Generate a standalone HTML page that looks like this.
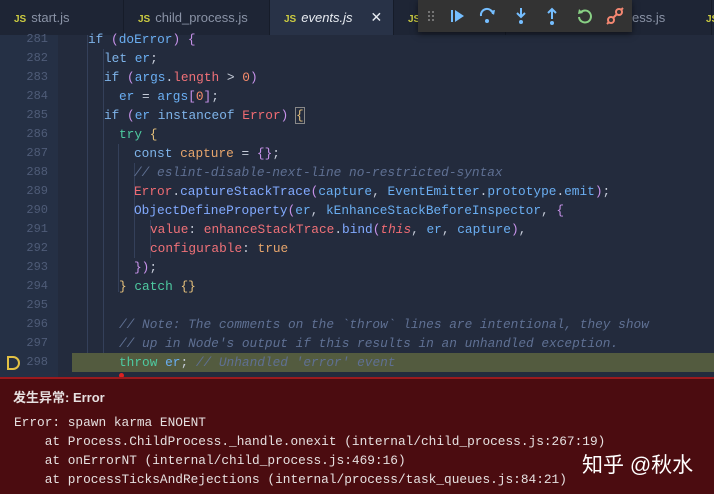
<!DOCTYPE html>
<html><head><meta charset="utf-8"><style>
*{margin:0;padding:0;box-sizing:border-box}
body{width:714px;height:494px;overflow:hidden;background:#232b3d;font-family:"Liberation Mono",monospace;position:relative}
.tabs{position:absolute;left:0;top:0;width:714px;height:35px;background:#1e2535;font-family:"Liberation Sans",sans-serif;font-size:13px;color:#8a93a6}
.tab{position:absolute;top:0;height:35px;line-height:35px;border-right:1px solid #161c29}
.js{color:#cbcb41;font-weight:bold;font-size:10px;margin-right:5px}
.tb{position:absolute;left:418px;top:0;width:214px;height:32px;background:#333;box-shadow:0 2px 6px rgba(0,0,0,.5)}
.gut{position:absolute;left:0;top:35px;width:58px;height:342px;background:#253045}
.ln{position:absolute;left:0;width:48px;text-align:right;font-size:12px;color:#4f5c78;height:19px;line-height:19px}
.code{position:absolute;left:72px;font-size:12.8px;color:#c5cbd8;white-space:pre;height:19px;line-height:19px}
.k{color:#7fb4ea}.t{color:#4ec9a0}.v{color:#6aaef2}.p{color:#f07178}.f{color:#82aaff}.r{color:#ef6b73}.o{color:#e6a56c}.c{color:#5f7093;font-style:italic}.b{color:#c792ea}.y{color:#e5c07b}.n{color:#f78c6c}
.guide{position:absolute;width:1px;background:#34405a}
.err{position:absolute;left:0;top:377px;width:714px;height:117px;background:#4b0c10;border-top:2px solid #9a1a1e;color:#e6e0e0}
</style></head><body>
<div class="tabs">
 <div class="tab" style="left:0;width:124px;padding-left:14px"><span class="js">JS</span>start.js</div>
 <div class="tab" style="left:124px;width:146px;padding-left:14px"><span class="js">JS</span>child_process.js</div>
 <div class="tab" style="left:270px;width:124px;padding-left:14px;background:#283247;color:#e8ecf2"><span class="js">JS</span><i>events.js</i><span style="margin-left:18px;font-size:14px">✕</span></div>
 <div class="tab" style="left:394px;width:112px;padding-left:14px"><span class="js">JS</span></div>
 <div class="tab" style="left:632px;width:80px;padding-left:0">ess.js</div>
 <div class="tab" style="left:706px;width:20px;padding-left:0;border:none"><span class="js">JS</span></div>
</div>
<div class="tb">
<svg width="214" height="32" viewBox="0 0 214 32">
<g fill="#8a8a8a"><circle cx="11" cy="12" r="1"/><circle cx="15" cy="12" r="1"/><circle cx="11" cy="16" r="1"/><circle cx="15" cy="16" r="1"/><circle cx="11" cy="20" r="1"/><circle cx="15" cy="20" r="1"/></g>
<rect x="33" y="10" width="2" height="12" fill="#75beff"/><path d="M37 10 L46 16 L37 22Z" fill="#75beff"/>
<path d="M63 16 A6 6 0 0 1 75 14" stroke="#75beff" stroke-width="2" fill="none"/><path d="M72 11 L76 15 L77 10Z" fill="#75beff"/><circle cx="69" cy="21" r="2" fill="#75beff"/>
<path d="M103 8 V17 M99 13 L103 17 L107 13" stroke="#75beff" stroke-width="2" fill="none"/><circle cx="103" cy="22" r="2" fill="#75beff"/>
<path d="M134 19 V9 M130 13 L134 9 L138 13" stroke="#75beff" stroke-width="2" fill="none"/><circle cx="134" cy="23" r="2" fill="#75beff"/>
<path d="M163 12 A6 6 0 1 1 161 17" stroke="#89d185" stroke-width="2" fill="none"/><path d="M161 9 L165 13 L160 14Z" fill="#89d185"/>
<g stroke="#f48771" stroke-width="2" fill="none"><circle cx="193" cy="20" r="3"/><circle cx="201" cy="12" r="3"/><path d="M195 18 L199 14 M189 24 L191 22 M203 10 L205 8"/></g>
</svg></div>
<div class="gut"></div>
<div style="position:absolute;left:72px;top:353px;width:642px;height:19px;background:#535b3f"></div>
<div class="guide" style="left:87px;top:35px;height:318px"></div>
<div class="guide" style="left:103px;top:49px;height:304px"></div>
<div class="guide" style="left:118px;top:144px;height:148px"></div>
<div class="guide" style="left:134px;top:163px;height:95px"></div>
<div class="guide" style="left:150px;top:220px;height:38px"></div>
<svg style="position:absolute;left:6px;top:355px" width="16" height="16"><path d="M2 2 H7 A6 6 0 0 1 7 14 H2Z" stroke="#e2c044" stroke-width="2" fill="none"/></svg>
<div style="position:absolute;left:119px;top:373px;width:5px;height:5px;border-radius:50%;background:#d22"></div>

<div class="ln" style="top:30px">281</div><div class="code" style="top:30px;left:88px"><span class="k">if</span> <span class="b">(</span><span class="v">doError</span><span class="b">)</span> <span class="b">{</span></div>
<div class="ln" style="top:49px">282</div><div class="code" style="top:49px;left:104px"><span class="k">let</span> <span class="v">er</span>;</div>
<div class="ln" style="top:68px">283</div><div class="code" style="top:68px;left:104px"><span class="k">if</span> <span class="b">(</span><span class="v">args</span>.<span class="p">length</span> &gt; <span class="n">0</span><span class="b">)</span></div>
<div class="ln" style="top:87px">284</div><div class="code" style="top:87px;left:119px"><span class="v">er</span> = <span class="v">args</span><span class="b">[</span><span class="n">0</span><span class="b">]</span>;</div>
<div class="ln" style="top:106px">285</div><div class="code" style="top:106px;left:104px"><span class="k">if</span> <span class="b">(</span><span class="v">er</span> <span class="k">instanceof</span> <span class="r">Error</span><span class="b">)</span> <span class="y" style="outline:1px solid #888">{</span></div>
<div class="ln" style="top:125px">286</div><div class="code" style="top:125px;left:119px"><span class="t">try</span> <span class="y">{</span></div>
<div class="ln" style="top:144px">287</div><div class="code" style="top:144px;left:134px"><span class="k">const</span> <span class="o">capture</span> = <span class="b">{}</span>;</div>
<div class="ln" style="top:163px">288</div><div class="code" style="top:163px;left:134px"><span class="c">// eslint-disable-next-line no-restricted-syntax</span></div>
<div class="ln" style="top:182px">289</div><div class="code" style="top:182px;left:134px"><span class="r">Error</span>.<span class="f">captureStackTrace</span><span class="b">(</span><span class="v">capture</span>, <span class="v">EventEmitter</span>.<span class="v">prototype</span>.<span class="v">emit</span><span class="b">)</span>;</div>
<div class="ln" style="top:201px">290</div><div class="code" style="top:201px;left:134px"><span class="f">ObjectDefineProperty</span><span class="b">(</span><span class="v">er</span>, <span class="v">kEnhanceStackBeforeInspector</span>, <span class="b">{</span></div>
<div class="ln" style="top:220px">291</div><div class="code" style="top:220px;left:150px"><span class="p">value</span>: <span class="p">enhanceStackTrace</span>.<span class="f">bind</span><span class="b">(</span><span class="r" style="font-style:italic">this</span>, <span class="v">er</span>, <span class="v">capture</span><span class="b">)</span>,</div>
<div class="ln" style="top:239px">292</div><div class="code" style="top:239px;left:150px"><span class="p">configurable</span>: <span class="o">true</span></div>
<div class="ln" style="top:258px">293</div><div class="code" style="top:258px;left:134px"><span class="b">})</span>;</div>
<div class="ln" style="top:277px">294</div><div class="code" style="top:277px;left:119px"><span class="y">}</span> <span class="t">catch</span> <span class="y">{}</span></div>
<div class="ln" style="top:296px">295</div>
<div class="ln" style="top:315px">296</div><div class="code" style="top:315px;left:119px"><span class="c">// Note: The comments on the `throw` lines are intentional, they show</span></div>
<div class="ln" style="top:334px">297</div><div class="code" style="top:334px;left:119px"><span class="c">// up in Node's output if this results in an unhandled exception.</span></div>
<div class="ln" style="top:353px">298</div><div class="code" style="top:353px;left:119px"><span class="t">throw</span> <span class="v">er</span>; <span class="c">// Unhandled 'error' event</span></div>

<div class="err">
<div style="position:absolute;left:13px;top:8px;font-family:'Liberation Sans','Noto Sans CJK SC',sans-serif;font-weight:bold;font-size:13px">发生异常: Error</div>
<div style="position:absolute;left:14px;top:34px;font-size:12.8px;line-height:19px;white-space:pre">Error: spawn karma ENOENT
    at Process.ChildProcess._handle.onexit (internal/child_process.js:267:19)
    at onErrorNT (internal/child_process.js:469:16)
    at processTicksAndRejections (internal/process/task_queues.js:84:21)</div>
<div style="position:absolute;left:582px;top:70px;font-family:'Liberation Sans','Noto Sans CJK SC',sans-serif;font-size:21px;color:#fff">知乎 @秋水</div>
</div>
</body></html>
